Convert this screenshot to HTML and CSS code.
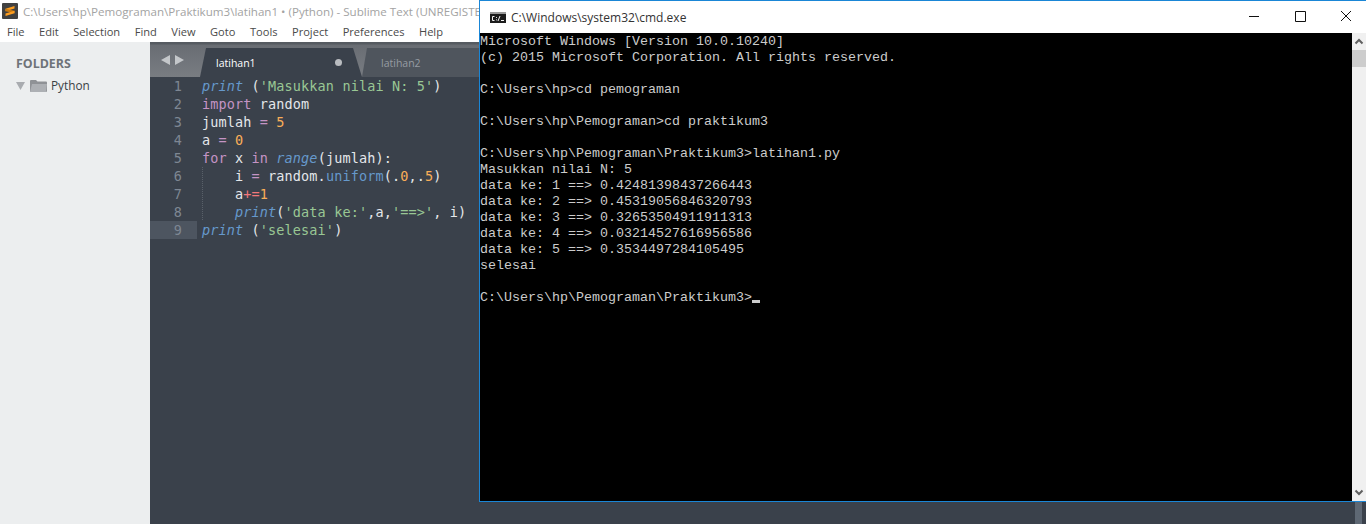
FILE: index.html
```html
<!DOCTYPE html>
<html lang="en">
<head>
<meta charset="utf-8">
<title>Sublime Text and cmd</title>
<link rel="stylesheet" href="styles.css">
</head>
<body>
<div class="desktop">
  <section class="sublime">
    <header class="st-title">
      <svg class="st-logo" width="16" height="16" viewBox="0 0 16 16"><rect width="16" height="16" rx="1" fill="#414141"/><path d="M3.5 5.8 12.5 3V5.4L3.5 8.2Z" fill="#ff9e1f"/><path d="M3.5 8.2 12.5 10.2V7.8L3.5 5.8Z" fill="#c97a12"/><path d="M3.5 10.6 12.5 7.8V10.2L3.5 13Z" fill="#ff9e1f"/></svg>
      <span class="st-title-text">C:\Users\hp\Pemograman\Praktikum3\latihan1 • (Python) - Sublime Text (UNREGISTERED)</span>
    </header>
    <nav class="st-menu">
      <span>File</span><span>Edit</span><span>Selection</span><span>Find</span><span>View</span><span>Goto</span><span>Tools</span><span>Project</span><span>Preferences</span><span>Help</span>
    </nav>
    <div class="st-body">
      <aside class="st-side">
        <div class="st-folders">FOLDERS</div>
        <div class="st-folder">
          <svg width="9" height="8" viewBox="0 0 9 8"><path d="M0 0H9L4.5 8Z" fill="#a9acb0"/></svg>
          <svg width="17" height="13" viewBox="0 0 17 13"><path d="M0 2Q0 1 1 1H6L7.5 2.5H16Q17 2.5 17 3.5V12Q17 13 16 13H1Q0 13 0 12Z" fill="#8f9296"/><path d="M0 13 2 5H17L16 13Z" fill="#adb0b4"/></svg>
          <span>Python</span>
        </div>
      </aside>
      <main class="st-editor">
        <div class="st-tabs">
          <div class="st-arrows">
            <svg width="9" height="10" viewBox="0 0 9 10"><path d="M9 0V10L0 5Z" fill="#c4c7ca"/></svg>
            <svg width="9" height="10" viewBox="0 0 9 10"><path d="M0 0V10L9 5Z" fill="#c4c7ca"/></svg>
          </div>
          <div class="tab tab-active"><span>latihan1</span><i class="tab-dot"></i></div>
          <div class="tab tab-idle"><span>latihan2</span></div>
        </div>
        <div class="code">
          <div class="ln"><b>1</b><code><em class="fn">print</em> (<u>'Masukkan nilai N: 5'</u>)</code></div>
          <div class="ln"><b>2</b><code><s>import</s> random</code></div>
          <div class="ln"><b>3</b><code>jumlah <s>=</s> <q>5</q></code></div>
          <div class="ln"><b>4</b><code>a <s>=</s> <q>0</q></code></div>
          <div class="ln"><b>5</b><code><s>for</s> x <s>in</s> <em class="fn">range</em>(jumlah):</code></div>
          <div class="ln"><b>6</b><code class="ind">    i <s>=</s> random.<var>uniform</var>(.<q>0</q>,.<q>5</q>)</code></div>
          <div class="ln"><b>7</b><code class="ind">    a<s class="op">+=</s><q>1</q></code></div>
          <div class="ln"><b>8</b><code class="ind">    <em class="fn">print</em>(<u>'data ke:'</u>,a,<u>'==&gt;'</u>, i)</code></div>
          <div class="ln ln-cur"><b>9</b><code><em class="fn">print</em> (<u>'selesai'</u>)</code></div>
        </div>
      </main>
    </div>
    <i class="st-scroll"></i>
  </section>

  <section class="cmd">
    <header class="cmd-title">
      <svg class="cmd-icon" width="16" height="11" viewBox="0 0 16 11"><rect width="16" height="11" fill="#1c1c1c"/><rect width="16" height="2" fill="#9a9a9a"/><path d="M4.5 4.5H2.5V8.5H4.5M6.5 5V5.9M6.5 7.4V8.3M10 4 8 9M11 8.5H14" stroke="#f2f2f2" fill="none"/></svg>
      <span class="cmd-title-text">C:\Windows\system32\cmd.exe</span>
      <div class="cmd-ctrls">
        <svg width="46" height="32" viewBox="0 0 46 32"><path d="M18 15.5H28" stroke="#111"/></svg>
        <svg width="46" height="32" viewBox="0 0 46 32"><path d="M18.5 10.5H28.5V20.5H18.5Z" stroke="#111" fill="none"/></svg>
        <svg width="46" height="32" viewBox="0 0 46 32"><path d="M18 10 28 20M28 10 18 20" stroke="#111" fill="none"/></svg>
      </div>
    </header>
    <div class="cmd-body">
      <pre class="console">Microsoft Windows [Version 10.0.10240]
(c) 2015 Microsoft Corporation. All rights reserved.

C:\Users\hp&gt;cd pemograman

C:\Users\hp\Pemograman&gt;cd praktikum3

C:\Users\hp\Pemograman\Praktikum3&gt;latihan1.py
Masukkan nilai N: 5
data ke: 1 ==&gt; 0.42481398437266443
data ke: 2 ==&gt; 0.45319056846320793
data ke: 3 ==&gt; 0.32653504911911313
data ke: 4 ==&gt; 0.03214527616956586
data ke: 5 ==&gt; 0.3534497284105495
selesai

C:\Users\hp\Pemograman\Praktikum3&gt;<i class="caret"></i></pre>
      <div class="cmd-scroll">
        <svg width="14" height="17" viewBox="0 0 14 17"><path d="M3.5 10.5 7 7 10.5 10.5" stroke="#606060" stroke-width="2" fill="none"/></svg>
        <i class="cmd-thumb"></i>
        <svg class="cmd-down" width="14" height="17" viewBox="0 0 14 17"><path d="M3.5 6.5 7 10 10.5 6.5" stroke="#606060" stroke-width="2" fill="none"/></svg>
      </div>
    </div>
  </section>
</div>
</body>
</html>
```
FILE: styles.css
```css
* { box-sizing: border-box; }
html, body { margin: 0; height: 100%; overflow: hidden; }
.desktop { position: relative; width: 1366px; height: 524px; overflow: hidden; background: #3a414b; }

/* Sublime window */
.sublime { display: flex; flex-direction: column; height: 524px; background: #3a414b; font-family: "Open Sans", "Noto Sans", sans-serif; }
.st-title { display: flex; align-items: center; gap: 5px; height: 22px; padding-left: 2px; background: #fff; }
.st-title-text { font-size: 11.6px; color: #a3a3a3; white-space: nowrap; }
.st-logo { flex: none; }
.st-menu { display: flex; height: 20px; padding: 0 0 1px 7px; gap: 14.5px; align-items: center; background: #fff; font-size: 11.1px; color: #4a4a4a; }
.st-body { flex: 1; display: flex; min-height: 0; }
.st-side { flex: none; width: 150px; background: #eceeef; padding: 13px 0 0 16px; }
.st-folders { font-size: 12.4px; font-weight: 700; color: #6f7479; line-height: 17px; }
.st-folder { display: flex; align-items: center; gap: 4px; margin-top: 5px; font-size: 11.8px; color: #3a3f45; line-height: 17px; }
.st-folder svg:first-child { margin-right: 1px; }
.st-editor { flex: 1; min-width: 0; }
.st-tabs { display: flex; align-items: flex-end; height: 35px; background: linear-gradient(#565b61 0, #565b61 2px, #696d73 3px, #797d82 100%); }
.st-arrows { display: flex; gap: 5px; width: 50px; padding: 0 0 12px 11px; }
.tab { position: relative; display: flex; align-items: center; height: 29px; font-size: 10.5px; }
.tab-active { width: 162px; padding-left: 16px; color: #fff; background: #3a414b; clip-path: polygon(0 100%, 6px 0, 153px 0, 162px 100%); z-index: 1; }
.tab-idle { flex: 1; padding-left: 19px; color: #969ca3; background: #4f555d; clip-path: polygon(0 100%, 5px 0, 100% 0, 100% 100%); }
.tab-dot { position: absolute; right: 20px; top: 11px; width: 7px; height: 7px; border-radius: 50%; background: #b9bcc0; }
.ln { display: flex; height: 18px; line-height: 18px; font-family: "DejaVu Sans Mono", monospace; font-size: 13.5px; color: #e4e7ea; }
.ln b { flex: none; width: 47px; padding-right: 15px; text-align: right; font-weight: 400; color: #7e8793; }
.ln code { flex: 1; padding-left: 5px; font: inherit; letter-spacing: .13px; white-space: pre; }
.ln-cur b { background: #4d5560; }
.ind { background: repeating-linear-gradient(#596069 0 1px, transparent 1px 2px) 5px 0 / 1px 100% no-repeat; }
.fn { font-style: italic; color: #6699cc; }
.ln u { text-decoration: none; color: #99c794; }
.ln s { text-decoration: none; color: #c594c5; }
.ln s.op { color: #f2777a; }
.ln q { quotes: none; color: #f9ae58; }
.ln var { font-style: normal; color: #6699cc; }

.st-scroll { position: absolute; left: 1355px; top: 502px; width: 7px; height: 22px; background: #5e6874; }

/* cmd window */
.cmd { position: absolute; left: 479px; top: 0; width: 887px; height: 502px; display: flex; flex-direction: column; background: #fff; border: solid #1a86d6; border-width: 1px 0 1px 1px; }
.cmd-title { display: flex; align-items: center; height: 32px; flex: none; padding-left: 10px; }
.cmd-icon { flex: none; margin: 0 5px 0 0; }
.cmd-title-text { font: 12px "Open Sans", "Noto Sans", sans-serif; color: #333; white-space: nowrap; }
.cmd-ctrls { display: flex; margin-left: auto; margin-right: -3px; }
.cmd-body { flex: 1; display: flex; min-height: 0; }
.console { flex: 1; margin: 0; padding-top: 1px; background: #000; color: #ccc; font: 13.33px/16px "Liberation Mono", monospace; white-space: pre; }
.caret { display: inline-block; width: 8px; height: 3px; background: #ccc; vertical-align: -2px; }
.cmd-scroll { flex: none; width: 14px; display: flex; flex-direction: column; background: #f0f0f0; }
.cmd-thumb { display: block; height: 17px; background: #cdcdcd; }
.cmd-down { margin-top: auto; }
```
